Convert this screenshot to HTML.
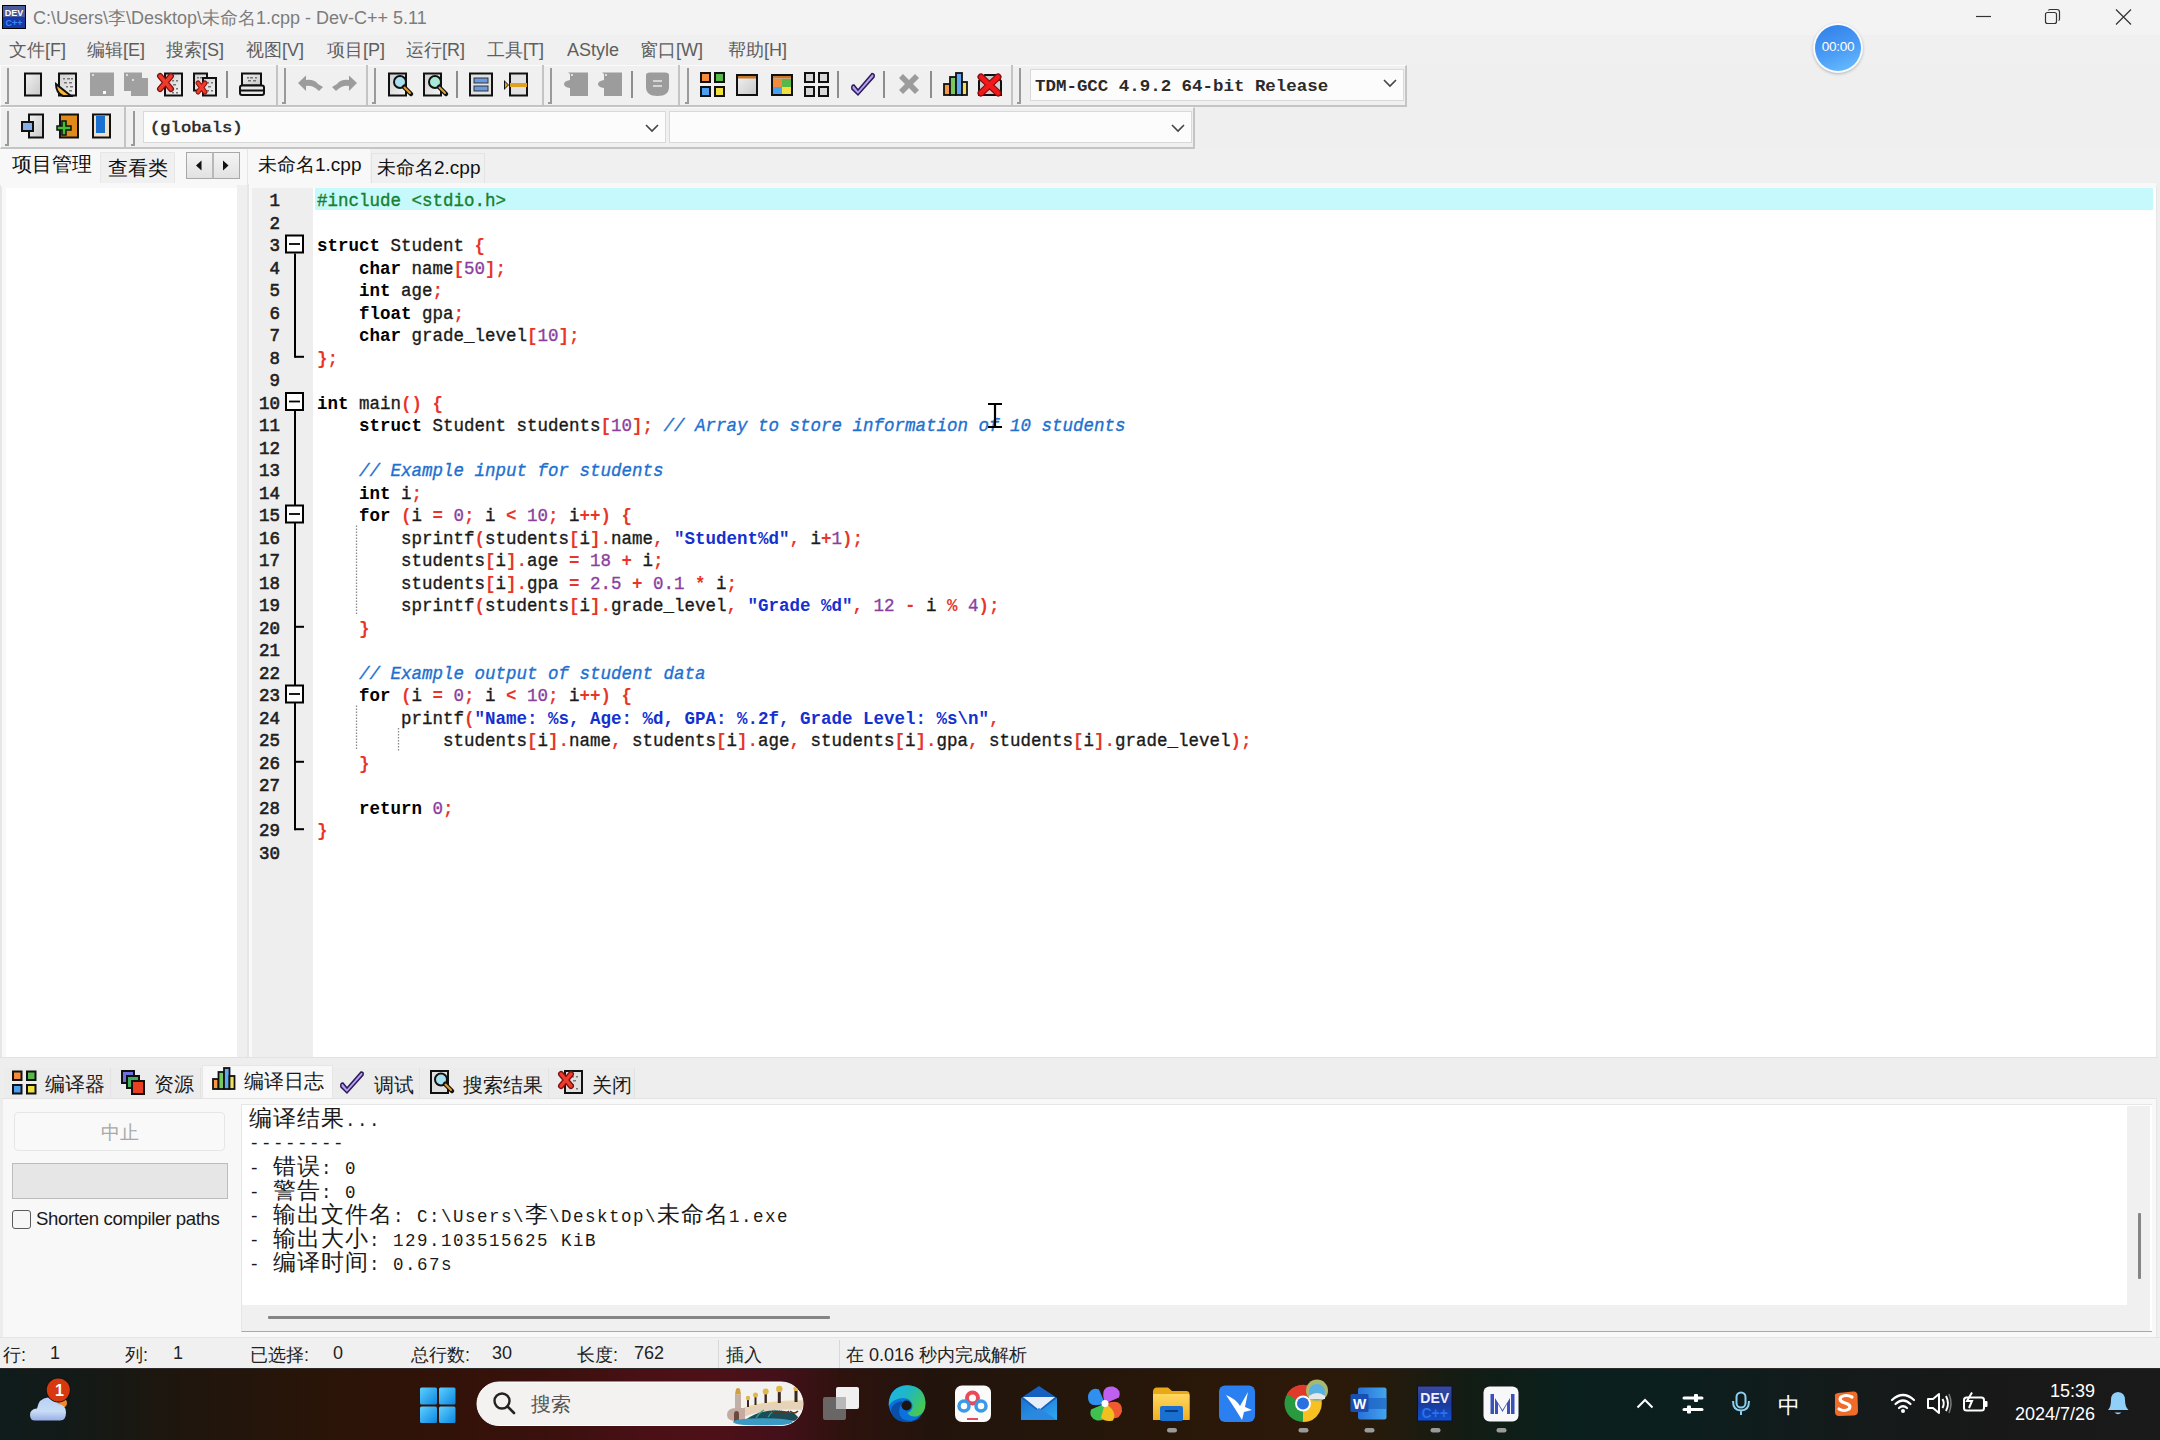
<!DOCTYPE html>
<html><head><meta charset="utf-8">
<style>
*{margin:0;padding:0;box-sizing:border-box}
html,body{width:2160px;height:1440px;overflow:hidden;background:#efefef;font-family:"Liberation Sans",sans-serif;color:#000}
.a{position:absolute}
#title{left:0;top:0;width:2160px;height:35px;background:#f3f3f3}
#ttext{left:33px;top:6px;font-size:18px;color:#7c7c7c;white-space:nowrap}
#menu{left:0;top:35px;width:2160px;height:30px;background:#f0f0f0}
.mi{top:38px;font-size:18px;color:#5e5e5e;white-space:nowrap}
.tb{background:#f0f0f0;border-top:1px solid #fbfbfb;border-bottom:2px solid #c4c4c4;border-right:2px solid #c4c4c4;border-left:1px solid #fbfbfb}
.combo{background:#fcfcfc;border:1px solid #d9d9d9}
.mono{font-family:"Liberation Mono",monospace}
#editor{left:249px;top:183px;width:1908px;height:875px;background:#fff;border-top:5px solid #f8f8f8;border-left:3px solid #f8f8f8;border-right:1px solid #e6e6e6;border-bottom:1px solid #e2e2e2}
#gutter{left:252px;top:188px;width:61px;height:869px;background:#eeeeee}
.ln{position:absolute;left:240px;transform:translateY(2.6px) scale(0.9545,1.01);transform-origin:100% 15px;width:40px;text-align:right;font-family:"Liberation Mono",monospace;font-size:18.334px;line-height:22.5px;height:22.5px;font-weight:normal;-webkit-text-stroke:0.6px #202020;color:#202020}
.cl{position:absolute;left:317px;transform:translateY(2.8px) scale(0.9545,1.04);transform-origin:0 15px;font-family:"Liberation Mono",monospace;font-size:18.334px;line-height:22.5px;height:22.5px;white-space:pre;color:#1a1a1a}
.cl{-webkit-text-stroke-width:0.35px}
.cl b,.st,.sy{-webkit-text-stroke-width:0}
.cl b{font-weight:bold;color:#000}
.pp{color:#16802e}
.cm{color:#2070d0;font-style:italic}
.st{color:#1530d0;font-weight:bold}
.nm{color:#8a3f9e}
.sy{color:#e8352a;font-weight:bold}
#hlline{left:315px;top:188px;width:1838px;height:21.5px;background:#c6f9fb}
#leftpanel{left:0;top:184px;width:237px;height:873px;background:#fff;border-left:2px solid #e6e6e6;border-top:4px solid #f8f8f8;box-shadow:inset 4px 0 0 #f8f8f8}
#status{left:0;top:1338px;width:2160px;height:32px;background:#f0f0f0}
.stt{top:1343px;font-size:18px;color:#222;white-space:nowrap}
#taskbar{left:0;top:1370px;width:2160px;height:70px;background:linear-gradient(90deg,#121a1c 0%,#2a1410 20%,#3a120e 35%,#3a1210 50%,#1c1614 62%,#0f1c1c 75%,#0d1a1c 100%)}
.logl{position:absolute;white-space:nowrap;font-family:"Liberation Mono",monospace;color:#1a1a1a;height:24px;line-height:24px}
.logl i{display:inline-block;font-style:normal;text-align:left;overflow:visible}
.log{position:absolute;left:248px;font-family:"Liberation Mono",monospace;font-size:18px;white-space:pre;color:#1a1a1a}
</style></head><body>
<div id="title" class="a"></div>
<svg class="a" style="left:2px;top:5px" width="25" height="25"><rect x="0.5" y="0.5" width="23" height="23" fill="#1838a8" stroke="#000"/><rect x="1" y="1" width="22" height="11" fill="#4a5a9a"/>
<text x="12" y="10.5" font-size="9" font-weight="bold" fill="#fff" text-anchor="middle" font-family="Liberation Sans">DEV</text>
<text x="12" y="20.5" font-size="9" font-weight="bold" fill="#3a8af8" text-anchor="middle" font-family="Liberation Sans">C++</text></svg>
<div id="ttext" class="a">C:\Users\李\Desktop\未命名1.cpp - Dev-C++ 5.11</div>

<!-- window controls -->
<svg class="a" style="left:1960px;top:0" width="200" height="35">
<path d="M16 16.5 H31" stroke="#333" stroke-width="1.2"/>
<rect x="85.5" y="12.5" width="11" height="11" rx="2" fill="none" stroke="#333" stroke-width="1.2"/>
<path d="M88.5 10.5 Q88.5 9.5 90 9.5 H97 Q99.5 9.5 99.5 12 V19 Q99.5 20.5 98.5 20.5" fill="none" stroke="#333" stroke-width="1.2"/>
<path d="M156 9.5 L171 24.5 M171 9.5 L156 24.5" stroke="#333" stroke-width="1.2"/>
</svg>
<div id="menu" class="a"></div>
<div class="a mi" style="left:9px">文件[F]</div>
<div class="a mi" style="left:87px">编辑[E]</div>
<div class="a mi" style="left:166px">搜索[S]</div>
<div class="a mi" style="left:246px">视图[V]</div>
<div class="a mi" style="left:327px">项目[P]</div>
<div class="a mi" style="left:406px">运行[R]</div>
<div class="a mi" style="left:487px">工具[T]</div>
<div class="a mi" style="left:567px;top:39.5px">AStyle</div>
<div class="a mi" style="left:640px">窗口[W]</div>
<div class="a mi" style="left:728px">帮助[H]</div>

<!-- toolbars -->
<div class="a tb" style="left:0;top:65px;width:1407px;height:42px"></div>
<div class="a combo" style="left:1030px;top:69px;width:374px;height:32px"></div>
<div class="a mono" style="left:1035px;top:76px;height:22px;line-height:22px;font-size:18.334px;font-weight:bold;color:#2a2a2a;white-space:pre;transform:scale(0.952,0.88);transform-origin:0 16.5px">TDM-GCC 4.9.2 64-bit Release</div>
<div class="a tb" style="left:0;top:107px;width:1195px;height:42px"></div>
<div class="a combo" style="left:143px;top:111px;width:523px;height:32px"></div>
<div class="a mono" style="left:150px;top:118px;height:20px;line-height:20px;font-size:16.667px;font-weight:normal;-webkit-text-stroke:0.6px #2a2a2a;color:#2a2a2a;white-space:pre;transform:scale(1.03,0.86);transform-origin:0 15px">(globals)</div>
<div class="a combo" style="left:669px;top:111px;width:523px;height:32px"></div>

<!-- toolbar1 decorations -->
<svg class="a" style="left:0;top:65px" width="1410" height="44">
<defs>
<linearGradient id="gdoc" x1="0" y1="0" x2="1" y2="1"><stop offset="0" stop-color="#cfcfcf"/><stop offset="1" stop-color="#f4f4f4"/></linearGradient>
<linearGradient id="gdoc2" x1="0" y1="0" x2="1" y2="1"><stop offset="0" stop-color="#f2f2f2"/><stop offset="1" stop-color="#c8c8c8"/></linearGradient>
</defs>
<g fill="none" stroke="#9a9a9a" stroke-width="2">
<path d="M8 3 V38 H5"/><path d="M285 3 V38 H282"/><path d="M375 3 V38 H372"/><path d="M551 3 V38 H548"/><path d="M688 3 V38 H685"/><path d="M1020 3 V38 H1017"/>
</g>
<g stroke="#8d8d8d" stroke-width="2">
<path d="M227 6 V33"/><path d="M457 6 V33"/><path d="M632 6 V33"/><path d="M838 6 V33"/><path d="M884 6 V33"/><path d="M931 6 V33"/>
</g>
<g stroke="#c4c4c4" stroke-width="2">
<path d="M277 0 V42"/><path d="M367 0 V42"/><path d="M543 0 V42"/><path d="M679 0 V42"/><path d="M1012 0 V42"/>
</g>
<!-- new -->
<rect x="25" y="8.5" width="16" height="22" fill="url(#gdoc2)" stroke="#111" stroke-width="2"/>
<!-- open -->
<rect x="59" y="8.5" width="17" height="22" fill="url(#gdoc)" stroke="#111" stroke-width="2"/>
<g fill="#777"><rect x="63" y="13" width="2" height="1.5"/><rect x="67" y="13" width="3" height="1.5"/><rect x="71" y="13" width="2" height="1.5"/><rect x="64" y="17" width="3" height="1.5"/><rect x="69" y="17" width="3" height="1.5"/><rect x="66" y="21" width="2" height="1.5"/><rect x="70" y="21" width="3" height="1.5"/><rect x="69" y="25" width="3" height="1.5"/></g>
<path d="M56 19 L71 31 H63 Q56 28 56 19 Z" fill="#f5b63a" stroke="#111" stroke-width="2"/>
<!-- save disabled -->
<path d="M90 7.5 H114 V31 H90 Z" fill="#a0a0a0"/><rect x="103" y="26" width="3" height="3" fill="#fff"/><rect x="92" y="9" width="2" height="2" fill="#ddd"/>
<!-- save all disabled -->
<path d="M124 7.5 H142 V13 H148 V31 H131 V26 H124 Z" fill="#a0a0a0"/><rect x="126" y="9" width="2" height="2" fill="#ddd"/><rect x="132" y="14" width="2" height="2" fill="#ddd"/>
<!-- close -->
<rect x="165" y="8.5" width="17" height="22" fill="url(#gdoc)" stroke="#111" stroke-width="2"/>
<g fill="#777"><rect x="172" y="15" width="2" height="1.5"/><rect x="176" y="15" width="2" height="1.5"/><rect x="173" y="19" width="3" height="1.5"/><rect x="172" y="23" width="2" height="1.5"/><rect x="176" y="23" width="2" height="1.5"/><rect x="172" y="27" width="2" height="1.5"/><rect x="176" y="27" width="2" height="1.5"/></g>
<path d="M160 11 L171 24 M171 11 L160 24" stroke="#7a1010" stroke-width="6" stroke-linecap="round"/>
<path d="M160 11 L171 24 M171 11 L160 24" stroke="#f03a2a" stroke-width="3.5" stroke-linecap="round"/>
<!-- close all -->
<rect x="194" y="8.5" width="13" height="17" fill="url(#gdoc)" stroke="#111" stroke-width="2"/>
<rect x="203" y="13" width="13" height="17.5" fill="url(#gdoc)" stroke="#111" stroke-width="2"/>
<g fill="#777"><rect x="207" y="17" width="2" height="1.5"/><rect x="211" y="17" width="2" height="1.5"/><rect x="208" y="21" width="3" height="1.5"/><rect x="207" y="25" width="2" height="1.5"/><rect x="211" y="25" width="2" height="1.5"/><rect x="197" y="12" width="2" height="1.5"/><rect x="200" y="12" width="2" height="1.5"/></g>
<path d="M198 18 L205 27 M205 18 L198 27" stroke="#7a1010" stroke-width="5" stroke-linecap="round"/>
<path d="M198 18 L205 27 M205 18 L198 27" stroke="#f03a2a" stroke-width="3" stroke-linecap="round"/>
<!-- print -->
<rect x="242" y="8.5" width="19" height="12" fill="url(#gdoc2)" stroke="#111" stroke-width="2"/>
<g fill="#777"><rect x="247" y="12" width="2" height="1.5"/><rect x="250" y="12" width="3" height="1.5"/><rect x="255" y="12" width="2" height="1.5"/><rect x="248" y="15" width="3" height="1.5"/><rect x="253" y="15" width="3" height="1.5"/></g>
<rect x="240" y="20.5" width="24" height="9.5" rx="2" fill="#e8e8e8" stroke="#111" stroke-width="2"/>
<path d="M241 25.5 H263" stroke="#111" stroke-width="2"/>
<!-- undo/redo disabled -->
<path d="M298 18 L306 10.5 V15 Q314 14 318 19 L323 22 L319 26 Q313 20 306 21 V26 Z" fill="#9c9c9c"/>
<path d="M357 18 L349 10.5 V15 Q341 14 337 19 L332 22 L336 26 Q342 20 349 21 V26 Z" fill="#9c9c9c"/>
<!-- find -->
<rect x="389" y="8.5" width="17" height="22" fill="url(#gdoc)" stroke="#111" stroke-width="2"/>
<circle cx="400" cy="17" r="6" fill="#a8e0f0" stroke="#111" stroke-width="2"/>
<path d="M404 22 L411 29" stroke="#111" stroke-width="4.5" stroke-linecap="round"/><path d="M404.5 22.5 L410 28" stroke="#e0a030" stroke-width="2" stroke-linecap="round"/>
<!-- replace -->
<rect x="424" y="8.5" width="17" height="22" fill="url(#gdoc)" stroke="#111" stroke-width="2"/>
<circle cx="435" cy="17" r="6" fill="#a8ead8" stroke="#111" stroke-width="2"/>
<path d="M439 22 L446 29" stroke="#111" stroke-width="4.5" stroke-linecap="round"/><path d="M439.5 22.5 L445 28" stroke="#e0a030" stroke-width="2" stroke-linecap="round"/>
<!-- toggle bookmarks -->
<rect x="470" y="8.5" width="22" height="22" fill="#e2e2e2" stroke="#111" stroke-width="2"/>
<rect x="474" y="13" width="14" height="5" fill="#6a9ae0" stroke="#333" stroke-width="1"/>
<rect x="474" y="21" width="14" height="5" fill="#6a9ae0" stroke="#333" stroke-width="1"/>
<!-- goto line -->
<rect x="510" y="8.5" width="17" height="22" fill="#e2e2e2" stroke="#111" stroke-width="2"/>
<rect x="510" y="18" width="17" height="4" fill="#e0a020"/>
<path d="M504 15 L509 20 L504 25 Z" fill="#111"/><path d="M505 17 L508 20 L505 23 Z" fill="#d4a020"/>
<!-- indent/unindent disabled -->
<path d="M568 7.5 H588 V31 H570 V23 Q564 22 564 19 Q564 16 570 15 V9 Z" fill="#9c9c9c"/><rect x="571" y="9" width="2" height="2" fill="#ddd"/>
<path d="M602 7.5 H622 V31 H604 V23 Q598 22 598 19 Q598 16 604 15 V9 Z" fill="#9c9c9c"/><rect x="605" y="9" width="2" height="2" fill="#ddd"/>
<path d="M646 10 Q646 7.5 650 7.5 H665 Q669 7.5 669 10 V22 Q669 31 657.5 31 Q646 31 646 22 Z" fill="#9c9c9c"/>
<path d="M653 16 H662 M653 21 H662" stroke="#e8e8e8" stroke-width="1.5"/>
<!-- compile (4 color squares) -->
<rect x="701" y="8" width="9" height="9" fill="#f58a3a" stroke="#111" stroke-width="2"/>
<rect x="715" y="8" width="9" height="9" fill="#58b848" stroke="#111" stroke-width="2"/>
<rect x="701" y="22" width="9" height="9" fill="#4aa0f0" stroke="#111" stroke-width="2"/>
<rect x="715" y="22" width="9" height="9" fill="#f0e040" stroke="#111" stroke-width="2"/>
<!-- run (window) -->
<rect x="737" y="10" width="20" height="20" fill="url(#gdoc2)" stroke="#111" stroke-width="2"/>
<rect x="738" y="11" width="18" height="2.5" fill="#c87828"/>
<!-- compile&run -->
<rect x="772" y="10" width="20" height="20" fill="#ccc" stroke="#111" stroke-width="2"/>
<rect x="773" y="11" width="18" height="2.5" fill="#c87828"/>
<rect x="773" y="14" width="9" height="8" fill="#f58a3a"/><rect x="782" y="14" width="9" height="8" fill="#58b848"/>
<rect x="773" y="22" width="9" height="7" fill="#4aa0f0"/><rect x="782" y="22" width="9" height="7" fill="#f0e040"/>
<!-- rebuild (4 gray squares) -->
<rect x="805" y="8" width="9" height="9" fill="#d8d8d8" stroke="#111" stroke-width="2"/>
<rect x="819" y="8" width="9" height="9" fill="#d8d8d8" stroke="#111" stroke-width="2"/>
<rect x="805" y="22" width="9" height="9" fill="#d8d8d8" stroke="#111" stroke-width="2"/>
<rect x="819" y="22" width="9" height="9" fill="#d8d8d8" stroke="#111" stroke-width="2"/>
<!-- check -->
<path d="M852 24 Q851 20 854 20 L858 25 L872 8.5 Q875 9 874 12 L858 30 Z" fill="#b8a0f0" stroke="#2a1a5a" stroke-width="1.5"/>
<!-- stop gray X -->
<path d="M899 13 L903 9 L909 15 L915 9 L919 13 L913 19 L919 25 L915 29 L909 23 L903 29 L899 25 L905 19 Z" fill="#9c9c9c"/>
<!-- chart -->
<rect x="944" y="19" width="6" height="11" fill="#f59848" stroke="#111" stroke-width="1.8"/>
<rect x="950" y="12" width="6" height="18" fill="#78c860" stroke="#111" stroke-width="1.8"/>
<rect x="956" y="8" width="6" height="22" fill="#60a8f0" stroke="#111" stroke-width="1.8"/>
<rect x="962" y="17" width="5" height="13" fill="#f0e060" stroke="#111" stroke-width="1.8"/>
<!-- delete profile -->
<path d="M979 30 V16 L985 10 H996 L1001 16 V30 Z" fill="#ccc" stroke="#111" stroke-width="2"/>
<path d="M981 12 L998 28 M998 12 L981 28" stroke="#8a0a0a" stroke-width="7" stroke-linecap="round"/>
<path d="M981 12 L998 28 M998 12 L981 28" stroke="#f01818" stroke-width="4.5" stroke-linecap="round"/>
<!-- combo chevron -->
<path d="M1384 15 L1390 21 L1396 15" fill="none" stroke="#444" stroke-width="1.6"/>
</svg>
<svg class="a" style="left:0;top:107px" width="1200" height="44">
<g fill="none" stroke="#9a9a9a" stroke-width="2"><path d="M8 4 V38 H5"/><path d="M134 4 V38 H131"/></g>
<g stroke="#c4c4c4" stroke-width="2"><path d="M125 0 V42"/></g>
<!-- project icons -->
<rect x="29" y="7.5" width="14" height="23" fill="url(#gdoc2)" stroke="#111" stroke-width="2"/>
<rect x="22" y="15" width="11" height="9" fill="#88b0e8" stroke="#111" stroke-width="2"/>
<rect x="60" y="7.5" width="18" height="23" fill="#e08a1a" stroke="#111" stroke-width="2"/>
<path d="M62 14 V19 H57 V23 H62 V28 H66 V23 H71 V19 H66 V14 Z" fill="#40c030" stroke="#111" stroke-width="1.5"/>
<rect x="93" y="7.5" width="17" height="23" fill="#f0e0c8" stroke="#111" stroke-width="2"/>
<rect x="96" y="9" width="9" height="17" fill="#1a70d0"/>
<path d="M1172 18 L1178 24 L1184 18" fill="none" stroke="#444" stroke-width="1.6"/>
<path d="M646 18 L652 24 L658 18" fill="none" stroke="#444" stroke-width="1.6"/>
</svg>

<!-- tabs -->
<div class="a" style="left:0;top:149px;width:247px;height:36px;background:#f8f8f8"></div>
<div class="a" style="left:247px;top:149px;width:1913px;height:34px;background:#f0f0f0"></div>
<div class="a" style="left:247px;top:149px;width:2px;height:910px;background:#e6e6e6"></div>
<div class="a" style="left:12px;top:151px;font-size:20px;color:#111;white-space:nowrap">项目管理</div>
<div class="a" style="left:100px;top:152px;width:75px;height:31px;background:#f0f0f0;border:1px solid #e6e6e6;border-bottom:none"></div>
<div class="a" style="left:108px;top:155px;font-size:20px;color:#111;white-space:nowrap">查看类</div>
<div class="a" style="left:186px;top:152px;width:27px;height:27px;background:linear-gradient(#f4f4f4,#e2e2e2);border:1px solid #a8a8a8"></div>
<div class="a" style="left:212px;top:152px;width:28px;height:27px;background:linear-gradient(#f4f4f4,#e2e2e2);border:1px solid #a8a8a8;border-left:2px solid #b8b8b8"></div>
<svg class="a" style="left:186px;top:152px" width="54" height="27"><path d="M196 8.5 L201.5 13.5 L196 18.5" transform="translate(-186 0) rotate(180 198.75 13.5)" fill="#111"/><path d="M223 8.5 L228.5 13.5 L223 18.5 Z" transform="translate(-186 0)" fill="#111"/></svg>
<div class="a" style="left:248px;top:149px;width:122px;height:35px;background:#f8f8f8"></div>
<div class="a" style="left:258px;top:152px;font-size:19px;color:#111;white-space:nowrap">未命名1.cpp</div>
<div class="a" style="left:371px;top:153px;width:114px;height:31px;background:#f0f0f0;border:1px solid #e4e4e4;border-bottom:none"></div>
<div class="a" style="left:377px;top:155px;font-size:19px;color:#111;white-space:nowrap">未命名2.cpp</div>

<div id="leftpanel" class="a"></div>
<div id="editor" class="a"></div>
<div id="gutter" class="a"></div>
<div id="hlline" class="a"></div>
<div class="ln" style="top:188.0px">1</div>
<div class="cl" style="top:188.0px"><span class="pp">#include &lt;stdio.h&gt;</span></div>
<div class="ln" style="top:210.5px">2</div>
<div class="ln" style="top:233.0px">3</div>
<div class="cl" style="top:233.0px"><b>struct</b> Student <span class="sy">{</span></div>
<div class="ln" style="top:255.5px">4</div>
<div class="cl" style="top:255.5px">    <b>char</b> name<span class="sy">[</span><span class="nm">50</span><span class="sy">]</span><span class="sy">;</span></div>
<div class="ln" style="top:278.0px">5</div>
<div class="cl" style="top:278.0px">    <b>int</b> age<span class="sy">;</span></div>
<div class="ln" style="top:300.5px">6</div>
<div class="cl" style="top:300.5px">    <b>float</b> gpa<span class="sy">;</span></div>
<div class="ln" style="top:323.0px">7</div>
<div class="cl" style="top:323.0px">    <b>char</b> grade_level<span class="sy">[</span><span class="nm">10</span><span class="sy">]</span><span class="sy">;</span></div>
<div class="ln" style="top:345.5px">8</div>
<div class="cl" style="top:345.5px"><span class="sy">}</span><span class="sy">;</span></div>
<div class="ln" style="top:368.0px">9</div>
<div class="ln" style="top:390.5px">10</div>
<div class="cl" style="top:390.5px"><b>int</b> main<span class="sy">(</span><span class="sy">)</span> <span class="sy">{</span></div>
<div class="ln" style="top:413.0px">11</div>
<div class="cl" style="top:413.0px">    <b>struct</b> Student students<span class="sy">[</span><span class="nm">10</span><span class="sy">]</span><span class="sy">;</span> <span class="cm">// Array to store information of 10 students</span></div>
<div class="ln" style="top:435.5px">12</div>
<div class="ln" style="top:458.0px">13</div>
<div class="cl" style="top:458.0px">    <span class="cm">// Example input for students</span></div>
<div class="ln" style="top:480.5px">14</div>
<div class="cl" style="top:480.5px">    <b>int</b> i<span class="sy">;</span></div>
<div class="ln" style="top:503.0px">15</div>
<div class="cl" style="top:503.0px">    <b>for</b> <span class="sy">(</span>i <span class="sy">=</span> <span class="nm">0</span><span class="sy">;</span> i <span class="sy">&lt;</span> <span class="nm">10</span><span class="sy">;</span> i<span class="sy">+</span><span class="sy">+</span><span class="sy">)</span> <span class="sy">{</span></div>
<div class="ln" style="top:525.5px">16</div>
<div class="cl" style="top:525.5px">        sprintf<span class="sy">(</span>students<span class="sy">[</span>i<span class="sy">]</span><span class="sy">.</span>name<span class="sy">,</span> <span class="st">&quot;Student%d&quot;</span><span class="sy">,</span> i<span class="sy">+</span><span class="nm">1</span><span class="sy">)</span><span class="sy">;</span></div>
<div class="ln" style="top:548.0px">17</div>
<div class="cl" style="top:548.0px">        students<span class="sy">[</span>i<span class="sy">]</span><span class="sy">.</span>age <span class="sy">=</span> <span class="nm">18</span> <span class="sy">+</span> i<span class="sy">;</span></div>
<div class="ln" style="top:570.5px">18</div>
<div class="cl" style="top:570.5px">        students<span class="sy">[</span>i<span class="sy">]</span><span class="sy">.</span>gpa <span class="sy">=</span> <span class="nm">2.5</span> <span class="sy">+</span> <span class="nm">0.1</span> <span class="sy">*</span> i<span class="sy">;</span></div>
<div class="ln" style="top:593.0px">19</div>
<div class="cl" style="top:593.0px">        sprintf<span class="sy">(</span>students<span class="sy">[</span>i<span class="sy">]</span><span class="sy">.</span>grade_level<span class="sy">,</span> <span class="st">&quot;Grade %d&quot;</span><span class="sy">,</span> <span class="nm">12</span> <span class="sy">-</span> i <span class="sy">%</span> <span class="nm">4</span><span class="sy">)</span><span class="sy">;</span></div>
<div class="ln" style="top:615.5px">20</div>
<div class="cl" style="top:615.5px">    <span class="sy">}</span></div>
<div class="ln" style="top:638.0px">21</div>
<div class="ln" style="top:660.5px">22</div>
<div class="cl" style="top:660.5px">    <span class="cm">// Example output of student data</span></div>
<div class="ln" style="top:683.0px">23</div>
<div class="cl" style="top:683.0px">    <b>for</b> <span class="sy">(</span>i <span class="sy">=</span> <span class="nm">0</span><span class="sy">;</span> i <span class="sy">&lt;</span> <span class="nm">10</span><span class="sy">;</span> i<span class="sy">+</span><span class="sy">+</span><span class="sy">)</span> <span class="sy">{</span></div>
<div class="ln" style="top:705.5px">24</div>
<div class="cl" style="top:705.5px">        printf<span class="sy">(</span><span class="st">&quot;Name: %s, Age: %d, GPA: %.2f, Grade Level: %s\n&quot;</span><span class="sy">,</span></div>
<div class="ln" style="top:728.0px">25</div>
<div class="cl" style="top:728.0px">            students<span class="sy">[</span>i<span class="sy">]</span><span class="sy">.</span>name<span class="sy">,</span> students<span class="sy">[</span>i<span class="sy">]</span><span class="sy">.</span>age<span class="sy">,</span> students<span class="sy">[</span>i<span class="sy">]</span><span class="sy">.</span>gpa<span class="sy">,</span> students<span class="sy">[</span>i<span class="sy">]</span><span class="sy">.</span>grade_level<span class="sy">)</span><span class="sy">;</span></div>
<div class="ln" style="top:750.5px">26</div>
<div class="cl" style="top:750.5px">    <span class="sy">}</span></div>
<div class="ln" style="top:773.0px">27</div>
<div class="ln" style="top:795.5px">28</div>
<div class="cl" style="top:795.5px">    <b>return</b> <span class="nm">0</span><span class="sy">;</span></div>
<div class="ln" style="top:818.0px">29</div>
<div class="cl" style="top:818.0px"><span class="sy">}</span></div>
<div class="ln" style="top:840.5px">30</div>
<svg class="a" style="left:0;top:0" width="1100" height="900">
<path d="M295 253.5 V357.8" stroke="#000" stroke-width="2"/>
<path d="M295 356.8 H304" stroke="#000" stroke-width="2"/>
<path d="M295 411.0 V830.2" stroke="#000" stroke-width="2"/>
<path d="M295 829.2 H304" stroke="#000" stroke-width="2"/>
<path d="M295 626.8 H304" stroke="#000" stroke-width="2"/>
<path d="M295 761.8 H304" stroke="#000" stroke-width="2"/>
<rect x="286" y="235.5" width="17" height="17" fill="#fff" stroke="#000" stroke-width="2"/>
<path d="M289 244.0 H300" stroke="#000" stroke-width="1.8"/>
<rect x="286" y="393.0" width="17" height="17" fill="#fff" stroke="#000" stroke-width="2"/>
<path d="M289 401.5 H300" stroke="#000" stroke-width="1.8"/>
<rect x="286" y="505.5" width="17" height="17" fill="#fff" stroke="#000" stroke-width="2"/>
<path d="M289 514.0 H300" stroke="#000" stroke-width="1.8"/>
<rect x="286" y="685.5" width="17" height="17" fill="#fff" stroke="#000" stroke-width="2"/>
<path d="M289 694.0 H300" stroke="#000" stroke-width="1.8"/>
<path d="M356.5 525.5 V615.5" stroke="#8a8a8a" stroke-width="1.3" stroke-dasharray="1.5 1.5"/>
<path d="M356.5 705.5 V750.5" stroke="#8a8a8a" stroke-width="1.3" stroke-dasharray="1.5 1.5"/>
<path d="M398.5 728.0 V750.5" stroke="#8a8a8a" stroke-width="1.3" stroke-dasharray="1.5 1.5"/>
<path d="M988 404 H1002 M988 427 H1002 M995 405 V426" stroke="#000" stroke-width="2.2"/>
</svg>

<div class="a" style="left:0;top:1057px;width:2158px;height:1px;background:#e2e2e2"></div>
<div class="a" style="left:0;top:1058px;width:2160px;height:40px;background:#eeeeee"></div>
<div class="a" style="left:4px;top:1068px;width:107px;height:30px;background:#ececec;border-right:1px solid #e2e2e2"></div>
<div class="a" style="left:111px;top:1068px;width:90px;height:30px;background:#ececec;border-right:1px solid #e2e2e2"></div>
<div class="a" style="left:333px;top:1068px;width:87px;height:30px;background:#ececec;border-right:1px solid #e2e2e2"></div>
<div class="a" style="left:420px;top:1068px;width:129px;height:30px;background:#ececec;border-right:1px solid #e2e2e2"></div>
<div class="a" style="left:549px;top:1068px;width:86px;height:30px;background:#ececec;border-right:1px solid #e2e2e2"></div>
<div class="a" style="left:202px;top:1065px;width:131px;height:35px;background:#f8f8f8;border:1px solid #e6e6e6;border-bottom:none"></div>
<div class="a" style="left:0;top:1098px;width:2157px;height:240px;background:#f8f8f8;border-top:1px solid #e3e3e3;border-left:3px solid #ececec;border-right:1px solid #e6e6e6;border-bottom:1px solid #dedede"></div>
<div class="a" style="left:45px;top:1071px;font-size:19.5px;color:#1a1a1a;white-space:nowrap">编译器</div>
<div class="a" style="left:154px;top:1071px;font-size:19.5px;color:#1a1a1a;white-space:nowrap">资源</div>
<div class="a" style="left:244px;top:1068px;font-size:19.5px;color:#1a1a1a;white-space:nowrap">编译日志</div>
<div class="a" style="left:374px;top:1072px;font-size:19.5px;color:#1a1a1a;white-space:nowrap">调试</div>
<div class="a" style="left:463px;top:1072px;font-size:19.5px;color:#1a1a1a;white-space:nowrap">搜索结果</div>
<div class="a" style="left:592px;top:1072px;font-size:19.5px;color:#1a1a1a;white-space:nowrap">关闭</div>
<svg class="a" style="left:0;top:1060px" width="600" height="40">
<rect x="13" y="11.5" width="8.5" height="8.5" fill="#f58a3a" stroke="#111" stroke-width="2"/>
<rect x="27" y="11.5" width="8.5" height="8.5" fill="#58b848" stroke="#111" stroke-width="2"/>
<rect x="13" y="25" width="8.5" height="8.5" fill="#4aa0f0" stroke="#111" stroke-width="2"/>
<rect x="27" y="25" width="8.5" height="8.5" fill="#f0e040" stroke="#111" stroke-width="2"/>
<rect x="122" y="11" width="12" height="12" fill="#7070e0" stroke="#111" stroke-width="2"/>
<rect x="127" y="16" width="12" height="12" fill="#40b060" stroke="#111" stroke-width="2"/>
<rect x="132" y="21" width="12" height="13" fill="#e84020" stroke="#111" stroke-width="2"/>
<rect x="213" y="19" width="5.5" height="10" fill="#f59848" stroke="#111" stroke-width="1.8"/>
<rect x="218.5" y="12" width="5.5" height="17" fill="#78c860" stroke="#111" stroke-width="1.8"/>
<rect x="224" y="8" width="5.5" height="21" fill="#60a8f0" stroke="#111" stroke-width="1.8"/>
<rect x="229.5" y="16" width="5" height="13" fill="#f0e060" stroke="#111" stroke-width="1.8"/>
<path d="M341 27 Q340 23 343 23 L347 28 L361 12 Q364 12 363 15 L347 33 Z" fill="#b8a0f0" stroke="#2a1a5a" stroke-width="1.5"/>
<rect x="431" y="11" width="17" height="22" fill="#e0e0e0" stroke="#111" stroke-width="2"/>
<circle cx="441" cy="19.5" r="6" fill="#a8e0f0" stroke="#111" stroke-width="2"/>
<path d="M445 24 L452 31" stroke="#111" stroke-width="4.5" stroke-linecap="round"/><path d="M445.5 24.5 L451 30" stroke="#e0a030" stroke-width="2" stroke-linecap="round"/>
<rect x="565" y="11" width="17" height="22" fill="#e0e0e0" stroke="#111" stroke-width="2"/>
<g fill="#777"><rect x="572" y="16" width="2" height="1.5"/><rect x="576" y="16" width="2" height="1.5"/><rect x="573" y="20" width="3" height="1.5"/><rect x="572" y="24" width="2" height="1.5"/><rect x="576" y="28" width="2" height="1.5"/></g>
<path d="M561 14 L571 26 M571 14 L561 26" stroke="#7a1010" stroke-width="6" stroke-linecap="round"/>
<path d="M561 14 L571 26 M571 14 L561 26" stroke="#f03a2a" stroke-width="3.5" stroke-linecap="round"/>
</svg>
<div class="a" style="left:14px;top:1112px;width:211px;height:39px;border:1px solid #e6e6e6;border-radius:4px;background:#f9f9f9"></div>
<div class="a" style="left:101px;top:1120px;font-size:19px;color:#a8a8a8">中止</div>
<div class="a" style="left:12px;top:1163px;width:216px;height:36px;border:1px solid #bcbcbc;background:#e6e6e6"></div>
<div class="a" style="left:12px;top:1210px;width:19px;height:19px;border:1.5px solid #5a5a5a;border-radius:3px;background:#f6f6f6"></div>
<div class="a" style="left:36px;top:1208px;font-size:18.6px;letter-spacing:-0.35px;color:#1a1a1a;white-space:nowrap">Shorten compiler paths</div>
<div class="a" style="left:241px;top:1104px;width:1911px;height:228px;background:#fff;border-top:1px solid #e6e6e6;border-left:1px solid #e6e6e6;border-bottom:1px solid #a8a8a8"></div>
<div class="a" style="left:2127px;top:1106px;width:23px;height:199px;background:#f0f0f0"></div>
<div class="a" style="left:2138px;top:1213px;width:3px;height:66px;background:#858585;border-radius:1px"></div>
<div class="a" style="left:242px;top:1305px;width:1908px;height:26px;background:#f0f0f0"></div>
<div class="a" style="left:268px;top:1316px;width:562px;height:3px;background:#858585;border-radius:1px"></div>
<div class="a logl" style="left:249px;top:1107.5px"><i class="cj" style="width:24px;font-size:23px">编</i><i class="cj" style="width:24px;font-size:23px">译</i><i class="cj" style="width:24px;font-size:23px">结</i><i class="cj" style="width:24px;font-size:23px">果</i><i class="la" style="width:12px;font-size:17.5px">.</i><i class="la" style="width:12px;font-size:17.5px">.</i><i class="la" style="width:12px;font-size:17.5px">.</i></div>
<div class="a logl" style="left:249px;top:1131.6px"><i class="la" style="width:12px;font-size:17.5px">-</i><i class="la" style="width:12px;font-size:17.5px">-</i><i class="la" style="width:12px;font-size:17.5px">-</i><i class="la" style="width:12px;font-size:17.5px">-</i><i class="la" style="width:12px;font-size:17.5px">-</i><i class="la" style="width:12px;font-size:17.5px">-</i><i class="la" style="width:12px;font-size:17.5px">-</i><i class="la" style="width:12px;font-size:17.5px">-</i></div>
<div class="a logl" style="left:249px;top:1155.7px"><i class="la" style="width:12px;font-size:17.5px">-</i><i class="la" style="width:12px;font-size:17.5px">&nbsp;</i><i class="cj" style="width:24px;font-size:23px">错</i><i class="cj" style="width:24px;font-size:23px">误</i><i class="la" style="width:12px;font-size:17.5px">:</i><i class="la" style="width:12px;font-size:17.5px">&nbsp;</i><i class="la" style="width:12px;font-size:17.5px">0</i></div>
<div class="a logl" style="left:249px;top:1179.8px"><i class="la" style="width:12px;font-size:17.5px">-</i><i class="la" style="width:12px;font-size:17.5px">&nbsp;</i><i class="cj" style="width:24px;font-size:23px">警</i><i class="cj" style="width:24px;font-size:23px">告</i><i class="la" style="width:12px;font-size:17.5px">:</i><i class="la" style="width:12px;font-size:17.5px">&nbsp;</i><i class="la" style="width:12px;font-size:17.5px">0</i></div>
<div class="a logl" style="left:249px;top:1203.9px"><i class="la" style="width:12px;font-size:17.5px">-</i><i class="la" style="width:12px;font-size:17.5px">&nbsp;</i><i class="cj" style="width:24px;font-size:23px">输</i><i class="cj" style="width:24px;font-size:23px">出</i><i class="cj" style="width:24px;font-size:23px">文</i><i class="cj" style="width:24px;font-size:23px">件</i><i class="cj" style="width:24px;font-size:23px">名</i><i class="la" style="width:12px;font-size:17.5px">:</i><i class="la" style="width:12px;font-size:17.5px">&nbsp;</i><i class="la" style="width:12px;font-size:17.5px">C</i><i class="la" style="width:12px;font-size:17.5px">:</i><i class="la" style="width:12px;font-size:17.5px">\</i><i class="la" style="width:12px;font-size:17.5px">U</i><i class="la" style="width:12px;font-size:17.5px">s</i><i class="la" style="width:12px;font-size:17.5px">e</i><i class="la" style="width:12px;font-size:17.5px">r</i><i class="la" style="width:12px;font-size:17.5px">s</i><i class="la" style="width:12px;font-size:17.5px">\</i><i class="cj" style="width:24px;font-size:23px">李</i><i class="la" style="width:12px;font-size:17.5px">\</i><i class="la" style="width:12px;font-size:17.5px">D</i><i class="la" style="width:12px;font-size:17.5px">e</i><i class="la" style="width:12px;font-size:17.5px">s</i><i class="la" style="width:12px;font-size:17.5px">k</i><i class="la" style="width:12px;font-size:17.5px">t</i><i class="la" style="width:12px;font-size:17.5px">o</i><i class="la" style="width:12px;font-size:17.5px">p</i><i class="la" style="width:12px;font-size:17.5px">\</i><i class="cj" style="width:24px;font-size:23px">未</i><i class="cj" style="width:24px;font-size:23px">命</i><i class="cj" style="width:24px;font-size:23px">名</i><i class="la" style="width:12px;font-size:17.5px">1</i><i class="la" style="width:12px;font-size:17.5px">.</i><i class="la" style="width:12px;font-size:17.5px">e</i><i class="la" style="width:12px;font-size:17.5px">x</i><i class="la" style="width:12px;font-size:17.5px">e</i></div>
<div class="a logl" style="left:249px;top:1228.0px"><i class="la" style="width:12px;font-size:17.5px">-</i><i class="la" style="width:12px;font-size:17.5px">&nbsp;</i><i class="cj" style="width:24px;font-size:23px">输</i><i class="cj" style="width:24px;font-size:23px">出</i><i class="cj" style="width:24px;font-size:23px">大</i><i class="cj" style="width:24px;font-size:23px">小</i><i class="la" style="width:12px;font-size:17.5px">:</i><i class="la" style="width:12px;font-size:17.5px">&nbsp;</i><i class="la" style="width:12px;font-size:17.5px">1</i><i class="la" style="width:12px;font-size:17.5px">2</i><i class="la" style="width:12px;font-size:17.5px">9</i><i class="la" style="width:12px;font-size:17.5px">.</i><i class="la" style="width:12px;font-size:17.5px">1</i><i class="la" style="width:12px;font-size:17.5px">0</i><i class="la" style="width:12px;font-size:17.5px">3</i><i class="la" style="width:12px;font-size:17.5px">5</i><i class="la" style="width:12px;font-size:17.5px">1</i><i class="la" style="width:12px;font-size:17.5px">5</i><i class="la" style="width:12px;font-size:17.5px">6</i><i class="la" style="width:12px;font-size:17.5px">2</i><i class="la" style="width:12px;font-size:17.5px">5</i><i class="la" style="width:12px;font-size:17.5px">&nbsp;</i><i class="la" style="width:12px;font-size:17.5px">K</i><i class="la" style="width:12px;font-size:17.5px">i</i><i class="la" style="width:12px;font-size:17.5px">B</i></div>
<div class="a logl" style="left:249px;top:1252.1px"><i class="la" style="width:12px;font-size:17.5px">-</i><i class="la" style="width:12px;font-size:17.5px">&nbsp;</i><i class="cj" style="width:24px;font-size:23px">编</i><i class="cj" style="width:24px;font-size:23px">译</i><i class="cj" style="width:24px;font-size:23px">时</i><i class="cj" style="width:24px;font-size:23px">间</i><i class="la" style="width:12px;font-size:17.5px">:</i><i class="la" style="width:12px;font-size:17.5px">&nbsp;</i><i class="la" style="width:12px;font-size:17.5px">0</i><i class="la" style="width:12px;font-size:17.5px">.</i><i class="la" style="width:12px;font-size:17.5px">6</i><i class="la" style="width:12px;font-size:17.5px">7</i><i class="la" style="width:12px;font-size:17.5px">s</i></div>
<div class="a" style="left:0;top:1337px;width:2160px;height:31px;background:#f0f0f0;border-top:1px solid #e4e4e4"></div>
<div class="a" style="left:718px;top:1340px;width:1px;height:28px;background:#d8d8d8"></div>
<div class="a" style="left:839px;top:1340px;width:1px;height:28px;background:#d8d8d8"></div>
<div class="a stt" style="left:3px">行:</div>
<div class="a stt" style="left:50px">1</div>
<div class="a stt" style="left:125px">列:</div>
<div class="a stt" style="left:173px">1</div>
<div class="a stt" style="left:250px">已选择:</div>
<div class="a stt" style="left:333px">0</div>
<div class="a stt" style="left:411px">总行数:</div>
<div class="a stt" style="left:492px">30</div>
<div class="a stt" style="left:577px">长度:</div>
<div class="a stt" style="left:634px">762</div>
<div class="a stt" style="left:726px">插入</div>
<div class="a stt" style="left:846px">在 0.016 秒内完成解析</div>
<div class="a" style="left:0;top:1368px;width:2160px;height:72px;background:linear-gradient(90deg,#0f1c1c 0%,#121a18 3%,#1e160e 8%,#2a1408 15%,#321208 21%,#3c100e 26%,#4a1016 30%,#4e1018 33%,#44101a 36%,#2e120e 39%,#22140c 43%,#24160a 50%,#2c1808 58%,#2a1a0a 63%,#121c14 68%,#0a201e 73%,#0c1e1e 78%,#141a1a 85%,#181818 92%,#1a1a1a 100%)"></div>
<div class="a" style="left:0;top:1368px;width:2160px;height:1px;background:#2e2a2a"></div>
<svg class="a" style="left:0;top:1368px" width="2160" height="72">
<defs>
<linearGradient id="gwin" x1="0" y1="0" x2="1" y2="1"><stop offset="0" stop-color="#5fd0ff"/><stop offset="1" stop-color="#0a86e0"/></linearGradient>
<linearGradient id="gcloud" x1="0" y1="0" x2="0" y2="1"><stop offset="0" stop-color="#b8d0f8"/><stop offset="0.6" stop-color="#c8dcf4"/><stop offset="1" stop-color="#98aee8"/></linearGradient>
<linearGradient id="gedge" x1="0" y1="0" x2="1" y2="0.6"><stop offset="0" stop-color="#1ab4f0"/><stop offset="0.5" stop-color="#20b8c0"/><stop offset="1" stop-color="#48c850"/></linearGradient>
<linearGradient id="gmail" x1="0" y1="0" x2="1" y2="1"><stop offset="0" stop-color="#1a70d0"/><stop offset="1" stop-color="#30a8f0"/></linearGradient>
<linearGradient id="gfold" x1="0" y1="0" x2="0" y2="1"><stop offset="0" stop-color="#ffd860"/><stop offset="1" stop-color="#f0b020"/></linearGradient>
<linearGradient id="gword" x1="0" y1="0" x2="1" y2="0"><stop offset="0" stop-color="#2a70d8"/><stop offset="1" stop-color="#41a5ee"/></linearGradient>
<linearGradient id="gdev" x1="0" y1="0" x2="0" y2="1"><stop offset="0" stop-color="#3a4aa0"/><stop offset="0.5" stop-color="#1a3a9a"/><stop offset="1" stop-color="#1050d0"/></linearGradient>
</defs>
<!-- weather -->
<circle cx="62" cy="35" r="5" fill="#f08a30"/>
<path d="M35 52.5 Q30 52.5 30 47 Q30 41 37 40.5 Q39 30 48 29.5 Q56 29.5 58 36 Q66 36.5 66 44.5 Q66 52.5 60 52.5 Z" fill="url(#gcloud)"/>
<circle cx="58.3" cy="22" r="12.5" fill="#101414"/>
<circle cx="58.3" cy="22" r="11.5" fill="#d8380e"/>
<text x="59.5" y="28" font-size="16" font-weight="bold" fill="#fff" text-anchor="middle" font-family="Liberation Sans">1</text>
<!-- start -->
<rect x="420" y="19.5" width="17" height="17" rx="1.5" fill="url(#gwin)"/><rect x="439" y="19.5" width="16.5" height="17" rx="1.5" fill="url(#gwin)"/>
<rect x="420" y="38.5" width="17" height="16.5" rx="1.5" fill="url(#gwin)"/><rect x="439" y="38.5" width="16.5" height="16.5" rx="1.5" fill="url(#gwin)"/>
<!-- search -->
<rect x="477" y="14" width="326" height="43.5" rx="21.75" fill="#f3f2f1" stroke="#fff" stroke-width="1"/>
<circle cx="502" cy="33" r="7.5" fill="none" stroke="#222" stroke-width="2.4"/>
<path d="M507.5 38.5 L514 45" stroke="#222" stroke-width="2.6" stroke-linecap="round"/>
<!-- bridge art -->
<clipPath id="pill"><rect x="477" y="14" width="326" height="43.5" rx="21.75"/></clipPath>
<g clip-path="url(#pill)">
<path d="M744 40 Q772 32 806 33 V42 Q790 41 772 42 Q755 44 744 49 Z" fill="#e6d2b8"/>
<path d="M744 40 Q772 32 806 33" fill="none" stroke="#f0d8a0" stroke-width="1.5"/>
<path d="M745 52 Q766 37 794 45 L802 53 Z" fill="#1c4c58"/>
<path d="M756 50 Q760 44 764 42 M768 49 Q771 44 775 42" stroke="#3aa088" stroke-width="1.2" fill="none"/>
<g fill="none" stroke="#5a3818" stroke-width="1.6"><path d="M772 43 Q776 47 780 43"/><path d="M781 43 Q785 47 789 43"/><path d="M790 43 Q794 47 798 43"/></g>
<path d="M727 47 Q727 40 736 40 H745 V53 H737 Q727 53 727 47 Z" fill="#c4aaa0"/>
<path d="M734 53 V46 Q734 43 736.5 43 Q739 43 739 46 V53 Z" fill="#6a4a40"/>
<rect x="735" y="26.5" width="6" height="14" fill="#c0b0a8"/>
<path d="M735 26.5 L736 21 Q738 19 740 21 L741 26.5 Z" fill="#d0a040"/>
<ellipse cx="763" cy="54" rx="30" ry="3.8" fill="#3a9ac4"/>
<g fill="#3a2820"><rect x="747" y="31" width="2" height="8"/><rect x="754.5" y="28" width="2" height="9"/><rect x="764.5" y="25" width="2.4" height="10"/><rect x="777.8" y="23" width="3" height="12"/><rect x="794.5" y="22" width="3" height="12"/></g>
<g fill="#e0b848"><circle cx="748" cy="30" r="2.2"/><circle cx="755.5" cy="27" r="2.5"/><circle cx="765.7" cy="23.5" r="3"/><circle cx="779.3" cy="21" r="3.2"/><circle cx="796" cy="20.5" r="2.6"/></g>
</g>
<!-- task view -->
<rect x="836" y="19" width="23" height="22" rx="2" fill="#f0f0f0"/>
<rect x="823" y="29" width="23" height="23" rx="2" fill="#707070" opacity="0.9"/>
<rect x="836" y="29" width="10" height="12" fill="#b8b8b8"/>
<!-- edge -->
<circle cx="907" cy="35.6" r="18.3" fill="#0b72dc"/>
<path d="M888.8 36 Q890 18 907.5 17.3 Q924 18 925.5 34 Q926 45 918 48 Q911 50 907.5 45 Q913 42.5 912.5 37 Q911 30 903 30 Q893 30.5 888.8 38 Z" fill="url(#gedge)"/>
<path d="M902 35 Q896 44 902 50.5 Q911 56.5 922 48 Q917 54 907 54.2 Q892 53.5 891 42 Q892 35 902 33 Z" fill="#0a4ea8"/>
<circle cx="906.5" cy="37.5" r="5" fill="#1c1410"/>
<!-- baidu netdisk -->
<rect x="955" y="17.5" width="36" height="36.5" rx="7" fill="#fbfbfb"/>
<circle cx="972.5" cy="30" r="5.5" fill="none" stroke="#e84a5a" stroke-width="4"/>
<circle cx="964" cy="38" r="5" fill="none" stroke="#3a9ae8" stroke-width="3.5"/>
<circle cx="981" cy="38" r="5" fill="none" stroke="#3a9ae8" stroke-width="3.5"/>
<rect x="967" y="50" width="11" height="2" fill="#e84a5a"/>
<!-- mail -->
<path d="M1021 30 L1039 18 L1057 30 V52 H1021 Z" fill="#1560c0"/>
<path d="M1023 29 H1055 L1039 42 Z" fill="#e8eef8"/>
<path d="M1021 30 L1039 44 L1057 30 V52 H1021 Z" fill="url(#gmail)"/>
<path d="M1021 52 L1039 40 L1057 52 Z" fill="#2a88e0"/>
<!-- photos pinwheel -->
<g transform="translate(1105 35.5)">
<path d="M0 0 Q-6 -18 8 -17 Q17 -14 14 -6 Z" fill="#c060f0"/>
<path d="M0 0 Q18 -6 17 8 Q14 17 6 14 Z" fill="#f05a30"/>
<path d="M0 0 Q6 18 -8 17 Q-17 14 -14 6 Z" fill="#40c050"/>
<path d="M0 0 Q-18 6 -17 -8 Q-14 -17 -6 -14 Z" fill="#3090f0"/>
<path d="M0 0 Q13 8 8 17 Q0 19 -4 14 Z" fill="#f0c020"/>
<circle r="3.5" fill="#fff"/>
</g>
<!-- folder -->
<path d="M1153 24 Q1153 19.5 1157 19.5 H1168 L1172 23 H1186 Q1189.5 23 1189.5 26 V52 H1153 Z" fill="#e8a818"/>
<rect x="1153" y="26" width="36.5" height="26" rx="1" fill="url(#gfold)"/>
<rect x="1160" y="38" width="23" height="15" rx="2" fill="#1a70d0"/>
<rect x="1165" y="42" width="13" height="2" fill="#0a3a80"/>
<!-- xunlei -->
<rect x="1219" y="17.5" width="36" height="36.5" rx="6" fill="#2a80f0"/>
<path d="M1226 27 Q1236 31 1240 38 L1248 24 Q1246 34 1245 39 L1252 42 L1244 44 L1242 52 Q1236 42 1226 27 Z" fill="#fff"/>
<!-- chrome -->
<circle cx="1303" cy="35.5" r="18.5" fill="#2a9a40"/>
<path d="M1303 35.5 L1287 26 A18.5 18.5 0 0 1 1319 26 Z" fill="#e03a2a"/>
<path d="M1303 35.5 L1319 26 A18.5 18.5 0 0 1 1303 54 Z" fill="#f8c020"/>
<circle cx="1303" cy="35.5" r="8" fill="#fff"/><circle cx="1303" cy="35.5" r="6" fill="#2a70e0"/>
<circle cx="1317" cy="22.5" r="11" fill="#a8b870"/>
<circle cx="1317" cy="24" r="8" fill="#5ab0e0"/>
<path d="M1309 28 Q1317 22 1325 28 V31 H1309 Z" fill="#e8e8e8"/>
<!-- word -->
<rect x="1358" y="19.5" width="28.5" height="32" rx="2" fill="url(#gword)"/>
<rect x="1358" y="30" width="28.5" height="11" fill="#185abd" opacity="0.6"/>
<rect x="1350.5" y="26" width="18" height="18" rx="1.5" fill="#1750b0"/>
<text x="1359.5" y="40.5" font-size="14" font-weight="bold" fill="#fff" text-anchor="middle" font-family="Liberation Sans">W</text>
<!-- dev-c++ -->
<rect x="1417.5" y="18" width="34.5" height="35" fill="url(#gdev)" stroke="#0a1030" stroke-width="1"/>
<text x="1434.7" y="35" font-size="14" font-weight="bold" fill="#f0f0ff" text-anchor="middle" font-family="Liberation Sans">DEV</text>
<text x="1434.7" y="50" font-size="14" font-weight="bold" fill="#2a70f0" text-anchor="middle" font-family="Liberation Sans">C++</text>
<!-- imi -->
<rect x="1483.5" y="18.5" width="35" height="35" rx="6" fill="#f8f8fa"/>
<path d="M1490.5 26 H1494 V46 H1490.5 Z M1511 26 H1514.5 V46 H1511 Z" fill="#3a52b8"/>
<path d="M1495 30 L1502.5 42 L1510 30 V46 H1507 V36 L1502.5 44 L1498 36 V46 H1495 Z" fill="#3a52b8"/>
<!-- running indicators -->
<g fill="#9a9a98"><rect x="1167" y="60" width="10" height="4.5" rx="2.2"/><rect x="1298.5" y="60" width="10" height="4.5" rx="2.2"/><rect x="1364.5" y="60" width="10" height="4.5" rx="2.2"/><rect x="1430.5" y="60" width="10" height="4.5" rx="2.2"/><rect x="1496.5" y="60" width="10" height="4.5" rx="2.2"/></g>
<!-- tray -->
<path d="M1637.5 39.5 L1645 32 L1652.5 39.5" fill="none" stroke="#fff" stroke-width="2"/>
<g stroke="#fff" stroke-width="3" stroke-linecap="round"><path d="M1684 30 H1702"/><path d="M1684 41.5 H1702"/></g>
<g fill="#fff"><rect x="1694" y="26" width="4" height="8" rx="1"/><rect x="1687" y="37.5" width="4" height="8" rx="1"/></g>
<rect x="1736.5" y="24.5" width="9" height="15" rx="4.5" fill="none" stroke="#8cd0f0" stroke-width="2"/>
<path d="M1733 33 Q1733 42.5 1741 42.5 Q1749 42.5 1749 33 M1741 42.5 V47" fill="none" stroke="#8cd0f0" stroke-width="2"/>
<text x="1789" y="45" font-size="22" fill="#fff" text-anchor="middle" font-family="Liberation Sans">中</text>
<path d="M1835 29 Q1834 25.5 1838 25 L1853 23.5 Q1857 23 1857.5 27 L1858 43 Q1858 47 1854 47.5 L1839 48 Q1835 48 1835 44 Z" fill="#f06a28"/>
<path d="M1852 29 Q1846 26 1841 29 Q1838 33 1845 35 Q1852 37 1849 41 Q1844 44 1839 41" fill="none" stroke="#fff" stroke-width="3.2" stroke-linecap="round"/>
<g fill="none" stroke="#fff" stroke-width="2.2" stroke-linecap="round"><path d="M1892 32 Q1903 22 1914 32"/><path d="M1895.5 36 Q1903 29 1910.5 36"/><path d="M1899 40 Q1903 36.5 1907 40"/></g>
<circle cx="1903" cy="43" r="2" fill="#fff"/>
<path d="M1928 31 H1933 L1939 26 V45 L1933 40 H1928 Z" fill="none" stroke="#fff" stroke-width="2" stroke-linejoin="round"/>
<path d="M1942.5 31 Q1945 35.5 1942.5 40 M1946 28 Q1950 35.5 1946 43" fill="none" stroke="#fff" stroke-width="2"/>
<path d="M1949 26 Q1953 35.5 1949 45" fill="none" stroke="#777" stroke-width="1.5"/>
<rect x="1964" y="29.5" width="20" height="13" rx="2.5" fill="none" stroke="#fff" stroke-width="2"/>
<rect x="1984.5" y="33" width="3" height="6" rx="1" fill="#fff"/>
<path d="M1972 24.5 L1967 33 H1972 L1969 40" fill="none" stroke="#fff" stroke-width="2"/>
<path d="M2108 42 Q2111 39 2111 32 Q2111 24.5 2118 24 Q2125 24.5 2125 32 Q2125 39 2128.5 42 Z" fill="#90d0f8"/>
<path d="M2114.5 44.5 Q2118 48 2121.5 44.5 Z" fill="#90d0f8"/>
</svg>
<div class="a" style="left:531px;top:1391px;font-size:20px;color:#555;white-space:nowrap">搜索</div>
<div class="a" style="left:2000px;top:1381px;width:95px;text-align:right;font-size:18px;color:#fff;white-space:nowrap">15:39</div>
<div class="a" style="left:1990px;top:1404px;width:105px;text-align:right;font-size:18px;color:#fff;white-space:nowrap">2024/7/26</div>
<!-- timer bubble -->
<div class="a" style="left:1813px;top:23px;width:50px;height:50px;border-radius:50%;background:#f8fbff;box-shadow:0 1px 3px rgba(0,0,0,0.25)"></div>
<div class="a" style="left:1815px;top:25px;width:46px;height:46px;border-radius:50%;background:linear-gradient(160deg,#2f7fe8 0%,#4a9cf5 55%,#6cc0ff 100%)"></div>
<div class="a" style="left:1813px;top:39px;width:50px;text-align:center;font-size:13.5px;color:#fff;letter-spacing:-0.3px">00:00</div>
</body></html>
